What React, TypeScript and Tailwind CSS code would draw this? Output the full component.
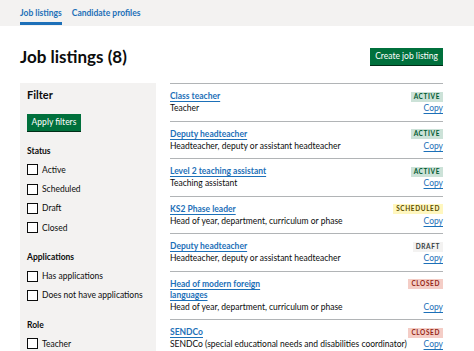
import React from "react";

interface Listing {
  title: string;
  role: string;
  status: "ACTIVE" | "SCHEDULED" | "DRAFT" | "CLOSED";
}

const listings: Listing[] = [
  { title: "Class teacher", role: "Teacher", status: "ACTIVE" },
  { title: "Deputy headteacher", role: "Headteacher, deputy or assistant headteacher", status: "ACTIVE" },
  { title: "Level 2 teaching assistant", role: "Teaching assistant", status: "ACTIVE" },
  { title: "KS2 Phase leader", role: "Head of year, department, curriculum or phase", status: "SCHEDULED" },
  { title: "Deputy headteacher", role: "Headteacher, deputy or assistant headteacher", status: "DRAFT" },
  { title: "Head of modern foreign languages", role: "Head of year, department, curriculum or phase", status: "CLOSED" },
  { title: "SENDCo", role: "SENDCo (special educational needs and disabilities coordinator)", status: "CLOSED" },
];

const tagStyles: Record<Listing["status"], string> = {
  ACTIVE: "bg-[#cce2d8] text-[#005a30]",
  SCHEDULED: "bg-[#fff7bf] text-[#594d00]",
  DRAFT: "bg-[#f3f2f1] text-[#383f43]",
  CLOSED: "bg-[#f4cdc6] text-[#942514]",
};

const Checkbox = ({ label }: { label: string }) => (
  <div className="flex items-center h-[19.33px]">
    <span className="w-[11px] h-[11px] border border-[#0b0c0c] bg-white shrink-0" />
    <span className="ml-[4px] text-[8.5px] leading-[12px]">{label}</span>
  </div>
);

const FilterSection = ({ title, options }: { title: string; options: string[] }) => (
  <div className="mt-[14px]">
    <h3 className="font-bold text-[8.5px] leading-[12px]">{title}</h3>
    <div className="mt-[3px] flex flex-col">
      {options.map((o) => (
        <Checkbox key={o} label={o} />
      ))}
    </div>
  </div>
);

export default function App() {
  return (
    <div
      className="w-[474px] h-[351px] overflow-hidden bg-white text-[#0b0c0c]"
      style={{ fontFamily: "Lato, 'Noto Sans', sans-serif" }}
    >
      {/* Top navigation */}
      <nav className="h-[26px] bg-[#f3f2f1] pl-[20px] flex gap-[10px]">
        <a className="relative flex items-center h-full text-[8.5px] font-bold text-[#1d70b8]">
          Job listings
          <span className="absolute left-0 right-0 bottom-[1px] h-[3px] bg-[#1d70b8]" />
        </a>
        <a className="flex items-center h-full text-[8.5px] font-bold text-[#1d70b8]">
          Candidate profiles
        </a>
      </nav>

      <main className="pl-[20px] pr-[31px]">
        {/* Heading */}
        <div className="pt-[22px] mb-[18px] flex items-center justify-between h-[39px]">
          <h1 className="text-[17px] leading-[17px] font-bold">Job listings (8)</h1>
          <button className="h-[17px] px-[5px] bg-[#00703c] text-white text-[8.5px] shadow-[0_1px_0_#002d18]">
            Create job listing
          </button>
        </div>

        <div className="flex gap-[14px]">
          {/* Filter panel */}
          <aside className="w-[136px] shrink-0 bg-[#f3f2f1] px-[7px] pt-[4.5px] h-[300px]">
            <h2 className="font-bold text-[11px] leading-[13px]">Filter</h2>
            <button className="mt-[13.5px] h-[17px] w-[54px] bg-[#00703c] text-white text-[8.5px] shadow-[0_1px_0_#002d18]">
              Apply filters
            </button>
            <FilterSection title="Status" options={["Active", "Scheduled", "Draft", "Closed"]} />
            <FilterSection title="Applications" options={["Has applications", "Does not have applications"]} />
            <FilterSection title="Role" options={["Teacher"]} />
          </aside>

          {/* Listings */}
          <ul className="flex-1">
            {listings.map((l, i) => (
              <li key={i} className="border-t border-[#b1b4b6] pt-[7px] pb-[5.5px]">
                <div className="flex justify-between items-start">
                  <a className="max-w-[118px] text-[8.5px] leading-[11px] font-bold text-[#1d70b8] underline underline-offset-[1.5px] decoration-[0.5px]">
                    {l.title}
                  </a>
                  <span
                    className={`mt-[0.5px] h-[10px] px-[3px] flex items-center text-[6.5px] font-bold tracking-[0.6px] ${tagStyles[l.status]}`}
                  >
                    {l.status}
                  </span>
                </div>
                <div className="flex justify-between items-center gap-[10px] h-[13px]">
                  <span className="text-[8.5px] leading-[13px] whitespace-nowrap">{l.role}</span>
                  <a className="text-[8.5px] leading-[13px] text-[#1d70b8] underline underline-offset-[1.5px] decoration-[0.5px]">
                    Copy
                  </a>
                </div>
              </li>
            ))}
          </ul>
        </div>
      </main>
    </div>
  );
}
